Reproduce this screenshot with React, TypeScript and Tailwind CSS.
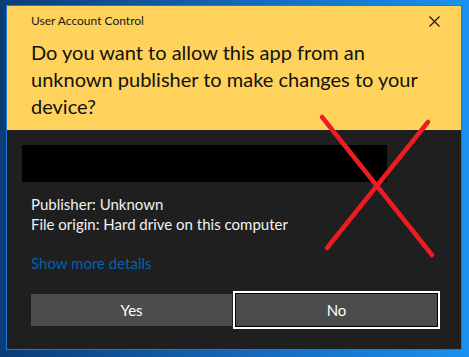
import React from 'react'

const font = { fontFamily: 'Lato, "Noto Sans", sans-serif' }

function CloseIcon() {
  return (
    <svg width="11" height="11" viewBox="0 0 11 11" className="block">
      <path d="M0.5 0.5 L10.5 10.5 M10.5 0.5 L0.5 10.5" stroke="#111" strokeWidth="1.1" fill="none" />
    </svg>
  )
}

export default function App() {
  return (
    <div
      className="relative w-[469px] h-[357px] overflow-hidden bg-gradient-to-r from-[#0a3d78] via-[#1466b8] to-[#1a92f0] pt-[5px] pl-[6px]"
      style={font}
    >
      <div className="w-[456px] h-[345px] border border-[#1d7ad4] flex flex-col">
        {/* header */}
        <div className="h-[124px] bg-[#ffd35b] px-[24px] pt-[7px]">
          <div className="flex items-center justify-between h-[16px]">
            <span className="text-[12px] leading-[16px] text-[#1a1a1a]">User Account Control</span>
            <span className="mr-[-3px]">
              <CloseIcon />
            </span>
          </div>
          <h1 className="mt-[10px] text-[20px] leading-[27px] text-[#111] font-normal">
            Do you want to allow this app from an unknown publisher to make changes to your device?
          </h1>
        </div>

        {/* body */}
        <div className="flex-1 bg-[#1f1f1f] px-[24px] pt-[15px]">
          <div className="ml-[-9px] w-[365px] h-[37px] bg-black" />
          <div className="mt-[12px] text-[15px] leading-[20px] text-[#f2f2f2]">
            <div>Publisher: Unknown</div>
            <div>File origin: Hard drive on this computer</div>
          </div>
          <div className="mt-[19px] text-[15px] leading-[20px] text-[#0063b1]">Show more details</div>
          <div className="mt-[21px] flex gap-[4px]">
            <button className="w-[201px] h-[32px] bg-[#4c4c4c] text-[15px] text-white">Yes</button>
            <button className="w-[201px] h-[32px] bg-[#4c4c4c] text-[15px] text-white shadow-[0_0_0_1px_#000,0_0_0_3px_#fff]">
              No
            </button>
          </div>
        </div>
      </div>

      {/* red cross drawn over the dialog */}
      <svg className="absolute left-0 top-0 pointer-events-none" width="469" height="357">
        <g stroke="#ed1c24" strokeWidth="4.5" strokeLinecap="round">
          <line x1="322" y1="117" x2="432" y2="255" />
          <line x1="428" y1="122" x2="327" y2="248" />
        </g>
      </svg>
    </div>
  )
}
